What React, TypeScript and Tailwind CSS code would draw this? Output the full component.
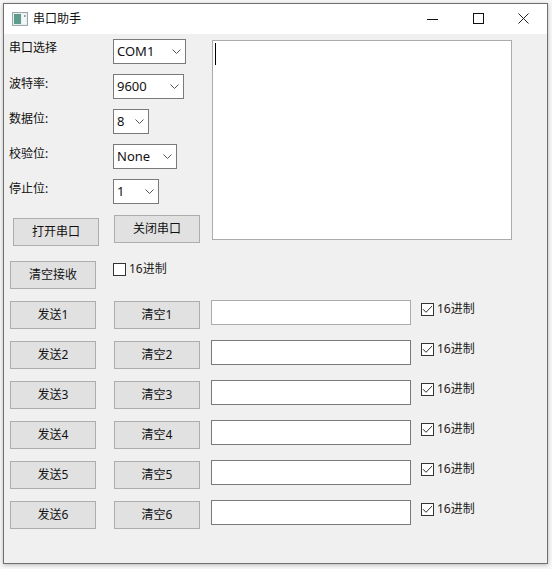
const font = "font-['Noto_Sans','Noto_Sans_CJK_SC',sans-serif]";

function Chevron() {
  return (
    <svg width="9" height="5" viewBox="0 0 9 5" fill="none" className="shrink-0">
      <path d="M0.5 0.5L4.5 4.5L8.5 0.5" stroke="#555" strokeWidth="1" />
    </svg>
  );
}

function Combo({ value, w }: { value: string; w: string }) {
  return (
    <div className={`${w} h-[25px] bg-white border border-[#7a7a7a] flex items-center justify-between pl-[3px] pr-[4px] text-[13px] leading-none text-[#111]`}>
      <span className="mb-[1px]">{value}</span>
      <Chevron />
    </div>
  );
}

function FormRow({ label, value, w, pad }: { label: string; value: string; w: string; pad: string }) {
  return (
    <div className="h-[35px] flex items-start">
      <div className={`w-[109px] pl-[5px] text-[12px] leading-[16px] text-[#111] ${pad}`}>{label}</div>
      <Combo value={value} w={w} />
    </div>
  );
}

function Btn({ label, className = "" }: { label: string; className?: string }) {
  return (
    <div className={`w-[86px] h-[28px] shrink-0 bg-[#e1e1e1] border border-[#adadad] flex items-center justify-center text-[12px] text-[#111] ${className}`}>
      {label}
    </div>
  );
}

function Check({ checked, className = "" }: { checked: boolean; className?: string }) {
  return (
    <div className={`flex items-center h-[14px] text-[12px] leading-none text-[#222] ${className}`}>
      <div className="w-[13px] h-[13px] bg-white border border-[#333] mr-[3px] flex items-center justify-center">
        {checked && (
          <svg width="11" height="9" viewBox="0 0 11 9" fill="none">
            <path d="M1 4.2L4 7.3L10 1" stroke="#333" strokeWidth="1" />
          </svg>
        )}
      </div>
      <span>16进制</span>
    </div>
  );
}

function SendRow({ n, first }: { n: number; first?: boolean }) {
  return (
    <div className="h-[40px] flex items-start">
      <Btn label={`发送${n}`} className="mt-[1px]" />
      <Btn label={`清空${n}`} className="mt-[1px] ml-[18px]" />
      <div className={`w-[200px] h-[25px] ml-[11px] bg-white border ${first ? "border-[#ababab]" : "border-[#7a7a7a]"}`} />
      <Check checked className="ml-[10px] mt-[2px]" />
    </div>
  );
}

export default function App() {
  return (
    <div className={`${font} w-[552px] h-[569px] bg-[#f7f7f7] pl-[3px] pt-[3px] overflow-hidden`}>
      <div className="w-[545px] h-[561px] border border-[#6f6f6f] bg-[#f0f0f0] shadow-[0_1px_4px_rgba(0,0,0,0.25)] flex flex-col">
        <div className="h-[30px] shrink-0 bg-white flex items-center">
          <svg width="16" height="14" viewBox="0 0 16 14" className="ml-[8px] shrink-0">
            <rect x="0.5" y="0.5" width="15" height="13" fill="#e8eef0" stroke="#9aa7ad" />
            <rect x="2" y="2" width="7" height="10" fill="#5f9c8c" />
            <rect x="10" y="2" width="4" height="10" fill="#f4f6f7" />
            <rect x="12" y="3" width="1.5" height="2" fill="#8a979c" />
          </svg>
          <span className="ml-[5px] text-[12px] text-[#111]">串口助手</span>
          <div className="ml-auto flex items-center">
            <svg width="11" height="1" viewBox="0 0 11 1" className="mr-[35px]"><rect width="11" height="1" fill="#111" /></svg>
            <svg width="11" height="11" viewBox="0 0 11 11" fill="none" className="mr-[34px] mb-[1px]"><rect x="0.5" y="0.5" width="10" height="10" stroke="#111" /></svg>
            <svg width="11" height="11" viewBox="0 0 11 11" fill="none" className="mr-[18px] mb-[1px]"><path d="M0.5 0.5L10.5 10.5M10.5 0.5L0.5 10.5" stroke="#222" /></svg>
          </div>
        </div>

        <div className="flex items-start pt-[5px]">
          <div className="w-[208px] shrink-0">
            <FormRow label="串口选择" value="COM1" w="w-[73px]" pad="pt-[1px]" />
            <FormRow label="波特率:" value="9600" w="w-[71px]" pad="pt-[2px]" />
            <FormRow label="数据位:" value="8" w="w-[36px]" pad="pt-[2px]" />
            <FormRow label="校验位:" value="None" w="w-[64px]" pad="pt-[2px]" />
            <FormRow label="停止位:" value="1" w="w-[46px]" pad="pt-[2px]" />
            <div className="flex items-start mt-[1px]">
              <Btn label="打开串口" className="ml-[9px] mt-[3px]" />
              <Btn label="关闭串口" className="ml-[15px]" />
            </div>
          </div>
          <div className="w-[300px] h-[200px] mt-[1px] bg-white border border-[#ababab] pl-[2px] pt-[2px]">
            <div className="w-[1px] h-[22px] bg-black" />
          </div>
        </div>

        <div className="flex items-start pl-[6px] mt-[15px]">
          <Btn label="清空接收" />
          <Check checked={false} className="ml-[17px] mt-[1px]" />
        </div>

        <div className="flex flex-col pl-[6px] mt-[11px]">
          {[1, 2, 3, 4, 5, 6].map((n) => (
            <SendRow key={n} n={n} first={n === 1} />
          ))}
        </div>
      </div>
    </div>
  );
}
